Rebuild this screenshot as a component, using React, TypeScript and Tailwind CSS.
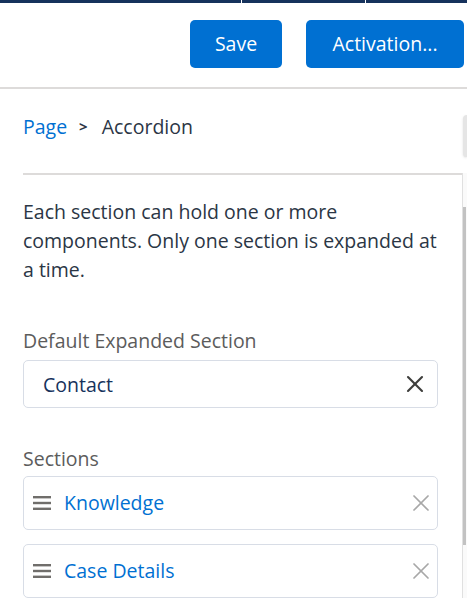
import { X } from "lucide-react";

const sections = ["Knowledge", "Case Details"];

function Hamburger() {
  return (
    <svg width="18" height="14" viewBox="0 0 18 14" className="shrink-0">
      <rect x="0" y="0" width="18" height="2.4" fill="#706e6b" />
      <rect x="0" y="5.8" width="18" height="2.4" fill="#706e6b" />
      <rect x="0" y="11.6" width="18" height="2.4" fill="#706e6b" />
    </svg>
  );
}

export default function App() {
  return (
    <div
      className="relative h-[603px] w-[467px] overflow-hidden bg-white text-[#16325c]"
      style={{ fontFamily: '"Open Sans", "Noto Sans", sans-serif' }}
    >
      {/* top nav strip */}
      <div className="flex h-[3px] bg-[#16325c]">
        <div className="w-[241px]" />
        <div className="w-px bg-white" />
        <div className="w-[123px]" />
        <div className="w-px bg-white" />
      </div>

      <div className="flex h-[84px] items-start justify-end gap-6 pr-[3px] pt-[17px]">
        <button className="h-12 w-[92px] rounded-[5px] bg-[#0070d2] text-[19.5px] text-white">
          Save
        </button>
        <button className="h-12 w-[158px] rounded-[5px] bg-[#0070d2] text-[19.5px] text-white">
          Activation...
        </button>
      </div>

      <div className="h-[2px] bg-[#dddbda]" />

      <div className="relative flex h-[84px] items-start pl-[23px] pt-[23px] text-[19.5px]">
        <span className="text-[#0070d2]">Page</span>
        <span className="ml-[12px] text-[15px] font-bold leading-[29px] text-[#2b3645]">&gt;</span>
        <span className="ml-[14px] text-[#2b3645]">Accordion</span>
        <div className="absolute right-0 top-[26px] h-[42px] w-[4px] rounded-l bg-[#e5e5e5] shadow" />
      </div>

      <div className="ml-[23px] flex">
        <div className="flex-1">
          <div className="h-[2px] bg-[#dddbda]" />
          <p className="mt-[22px] w-[418px] text-[19.5px] leading-[29px] text-[#2b3645]">
            Each section can hold one or more components. Only one section is expanded at a
            time.
          </p>

          <div className="mt-[42px] text-[19.5px] text-[#5c5c5c]">Default Expanded Section</div>
          <div className="mr-[24px] mt-[5px] flex h-[48px] items-center justify-between rounded-[5px] border border-[#d8dde6] pl-[19px] pr-[8px]">
            <span className="text-[19.5px] text-[#16325c]">Contact</span>
            <X size={28} strokeWidth={1.8} className="text-[#3e3e3c]" />
          </div>

          <div className="mt-[36px] text-[19.5px] text-[#5c5c5c]">Sections</div>
          <div className="mr-[24px] mt-[2px] flex flex-col gap-[14px]">
            {sections.map((s) => (
              <div
                key={s}
                className="flex h-[54px] items-center rounded-[5px] border border-[#d8dde6] pl-[9px] pr-[2px]"
              >
                <Hamburger />
                <span className="ml-[13px] flex-1 text-[19.5px] text-[#0070d2]">{s}</span>
                <X size={28} strokeWidth={1.5} className="text-[#a8a8a8]" />
              </div>
            ))}
          </div>
        </div>
        {/* scrollbar */}
        <div className="w-[5px] border-l border-[#e0e0e0] bg-[#fafafa] pt-[34px]">
          <div className="h-[338px] w-[3px] bg-[#c2c2c2]" />
        </div>
      </div>
    </div>
  );
}
